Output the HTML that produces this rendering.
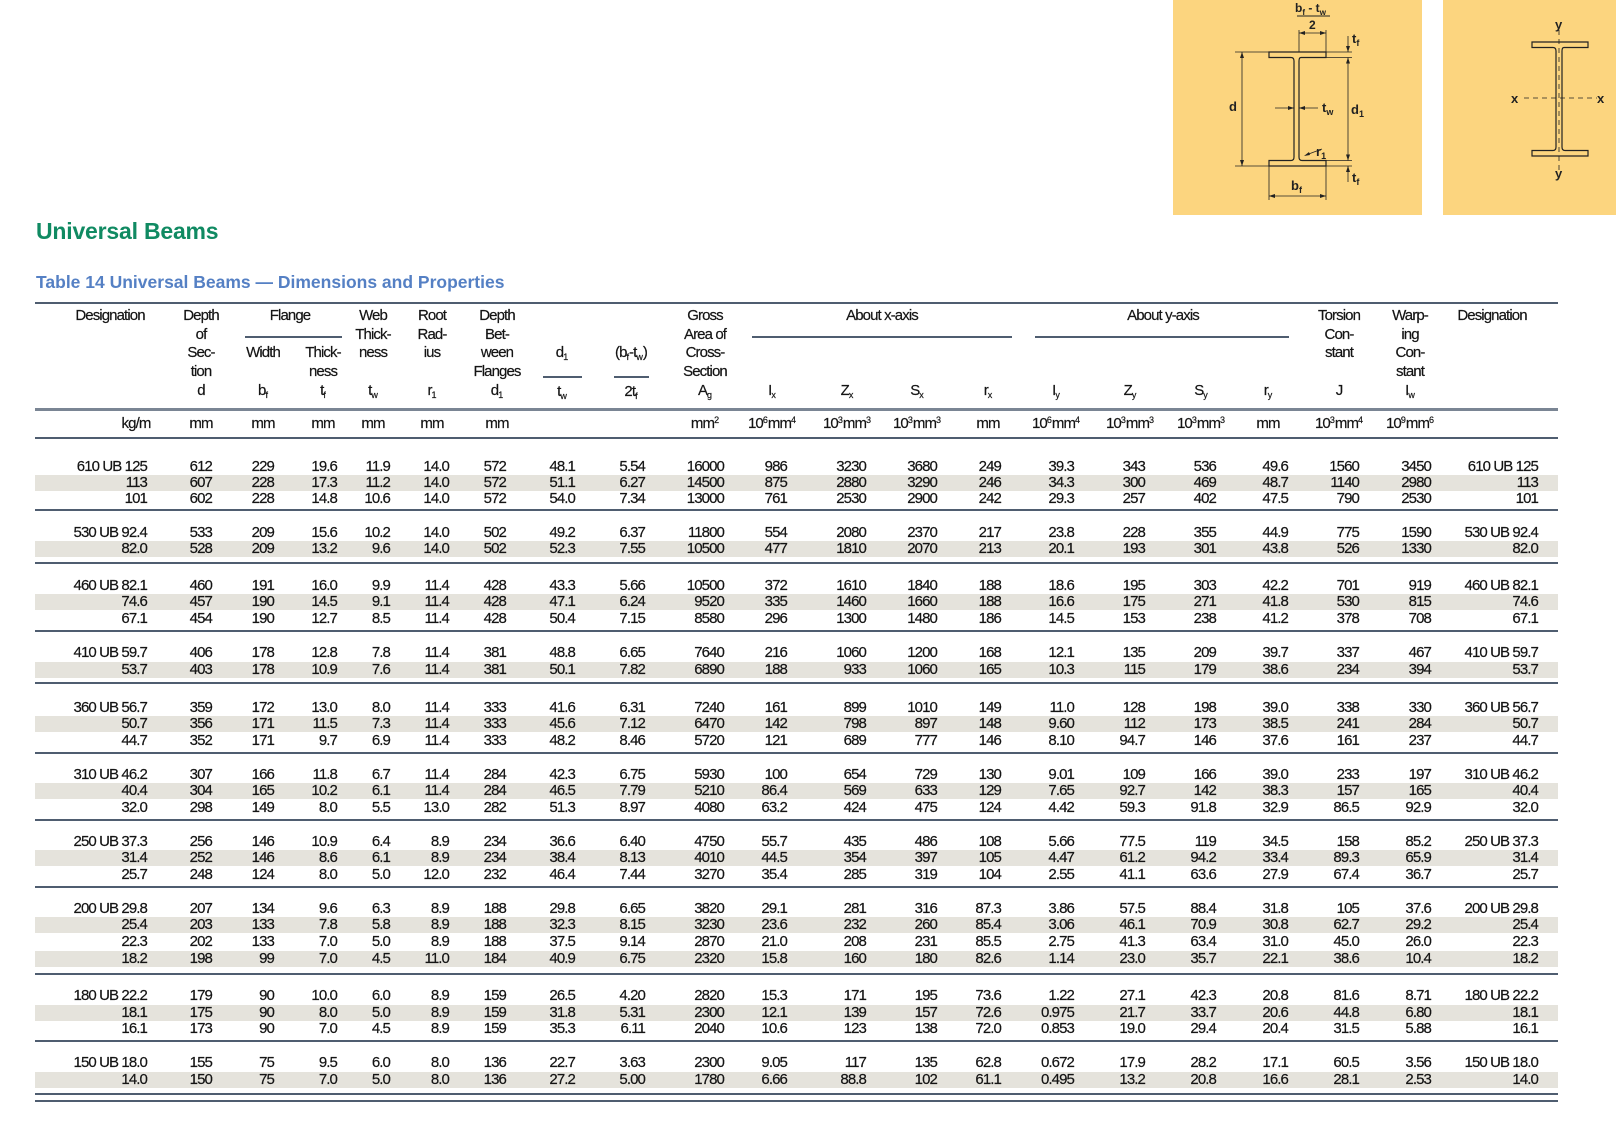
<!DOCTYPE html>
<html><head><meta charset="utf-8">
<style>
*{margin:0;padding:0;box-sizing:border-box}
body{width:1616px;height:1126px;background:#fff;position:relative;overflow:hidden;font-family:"Liberation Sans",sans-serif;color:#141414}
.t1{position:absolute;left:36px;top:218px;font-size:23px;font-weight:bold;color:#108a62;letter-spacing:-0.2px}
.t2{position:absolute;left:36px;top:272px;font-size:17.5px;font-weight:bold;color:#5580c4;letter-spacing:0;white-space:nowrap}
.ln{position:absolute;height:2px;background:#4f5d70}
.h{position:absolute;width:110px;text-align:center;font-size:15px;line-height:18.7px;letter-spacing:-0.9px;top:307px;white-space:nowrap;-webkit-text-stroke:0.2px #141414}
.u{position:absolute;width:110px;text-align:center;font-size:15px;line-height:16px;letter-spacing:-0.9px;top:416px;white-space:nowrap;-webkit-text-stroke:0.2px #141414}
.s{font-size:9px;position:relative;top:3px;letter-spacing:0}
.p{font-size:9px;position:relative;top:-5px;letter-spacing:0}
.r{position:absolute;left:35px;width:1523px;height:16px;line-height:16px;display:flex;font-size:15px;letter-spacing:-0.9px;-webkit-text-stroke:0.2px #141414}
.r.g{background:#e5e3dc}
.r span{display:block;text-align:right;white-space:nowrap}
.r span:nth-child(1){width:112px}.r span:nth-child(2){width:65px}.r span:nth-child(3){width:62px}.r span:nth-child(4){width:63px}
.r span:nth-child(5){width:53px}.r span:nth-child(6){width:59px}.r span:nth-child(7){width:57px}.r span:nth-child(8){width:69px}
.r span:nth-child(9){width:70px}.r span:nth-child(10){width:79px}.r span:nth-child(11){width:63px}.r span:nth-child(12){width:79px}
.r span:nth-child(13){width:71px}.r span:nth-child(14){width:64px}.r span:nth-child(15){width:73px}.r span:nth-child(16){width:71px}
.r span:nth-child(17){width:71px}.r span:nth-child(18){width:72px}.r span:nth-child(19){width:71px}.r span:nth-child(20){width:72px}
.r span:nth-child(21){width:107px}
</style></head><body>

<svg style="position:absolute;left:0;top:0" width="1616" height="1126" viewBox="0 0 1616 1126" font-family="Liberation Sans, sans-serif" font-weight="bold" fill="none">
<rect x="1173" y="0" width="249" height="215" fill="#fcd57f"/>
<rect x="1443" y="0" width="173" height="215" fill="#fcd57f"/>
<g stroke="#222" stroke-width="1.2">
<path d="M1269 52H1326V57.5H1301Q1299 57.5 1299 61V157Q1299 160.5 1302 160.5H1326V166H1269V160.5H1291Q1294 160.5 1294 157V61Q1294 57.5 1291 57.5H1269Z"/>
<path d="M1235 52H1269M1235 166H1269M1242 52V166" stroke-width="0.8"/>
<path d="M1326 52H1352M1326 57.5H1352M1326 160.5H1352M1326 166H1352M1348 57.5V160.5" stroke-width="0.8"/>
<path d="M1348 36V52M1348 166V182M1299 30V52M1326 30V52M1299 33H1326M1269 166V200M1326 166V200M1269 196H1326" stroke-width="0.8"/>
<path d="M1275 108H1294M1318 108H1299M1306 155L1322 149" stroke-width="0.8"/>
<path d="M1297 16H1330" stroke-width="1"/>
</g>
<g fill="#222">
<path d="M1242 52l-2 6h4zM1242 166l-2-6h4zM1348 57.5l-2 6h4zM1348 160.5l-2-6h4zM1348 52l-2-6h4zM1348 166l-2 6h4zM1299 33l6-2v4zM1326 33l-6-2v4zM1269 196l6-2v4zM1326 196l-6-2v4zM1294 108l-6-2v4zM1299 108l6-2v4zM1304 156l5-4 1 3z"/>
<text x="1229" y="111" font-size="13">d</text>
<text x="1351" y="114" font-size="13">d<tspan font-size="9" dy="3">1</tspan></text>
<text x="1322" y="112" font-size="13">t<tspan font-size="9" dy="3">w</tspan></text>
<text x="1352" y="43" font-size="13">t<tspan font-size="9" dy="3">f</tspan></text>
<text x="1352" y="182" font-size="13">t<tspan font-size="9" dy="3">f</tspan></text>
<text x="1291" y="190" font-size="13">b<tspan font-size="9" dy="3">f</tspan></text>
<text x="1316" y="156" font-size="13">r<tspan font-size="9" dy="3">1</tspan></text>
<text x="1295" y="12" font-size="12">b<tspan font-size="8" dy="3">f</tspan><tspan dy="-3"> - t</tspan><tspan font-size="8" dy="3">w</tspan></text>
<text x="1309" y="29" font-size="12">2</text>
</g>
<g stroke="#222" stroke-width="1.2">
<path d="M1532 42H1588V47.5H1564Q1562 47.5 1562 51V147Q1562 150.5 1565 150.5H1588V156H1532V150.5H1553Q1556 150.5 1556 147V51Q1556 47.5 1553 47.5H1532Z"/>
<path d="M1524 98H1597M1559 30V170" stroke-width="0.8" stroke-dasharray="5 4"/>
</g>
<g fill="#222" font-size="13">
<text x="1511" y="103">x</text><text x="1597" y="103">x</text>
<text x="1555" y="29">y</text><text x="1555" y="178">y</text>
</g>
</svg>

<div class="t1">Universal Beams</div>
<div class="t2">Table 14 Universal Beams — Dimensions and Properties</div>

<div class="ln" style="left:35px;top:302px;width:1523px"></div>
<div class="ln" style="left:35px;top:408px;width:1523px;background:#7a8594;height:2.5px"></div>
<div class="ln" style="left:35px;top:437px;width:1523px"></div>
<div class="ln" style="left:245px;top:336px;width:97px;height:1.5px"></div>
<div class="ln" style="left:543px;top:376px;width:39px;height:1.5px"></div>
<div class="ln" style="left:614px;top:376px;width:35px;height:1.5px"></div>
<div class="ln" style="left:752px;top:336px;width:260px;height:1.5px"></div>
<div class="ln" style="left:1035px;top:336px;width:254px;height:1.5px"></div>

<div class="h" style="left:55px">Designation</div>
<div class="h" style="left:146px">Depth<br>of<br>Sec-<br>tion<br>d</div>
<div class="h" style="left:235px">Flange</div>
<div class="h" style="left:208px">&nbsp;<br>&nbsp;<br>Width<br>&nbsp;<br>b<span class="s">f</span></div>
<div class="h" style="left:268px">&nbsp;<br>&nbsp;<br>Thick-<br>ness<br>t<span class="s">f</span></div>
<div class="h" style="left:318px">Web<br>Thick-<br>ness<br>&nbsp;<br>t<span class="s">w</span></div>
<div class="h" style="left:377px">Root<br>Rad-<br>ius<br>&nbsp;<br>r<span class="s">1</span></div>
<div class="h" style="left:442px">Depth<br>Bet-<br>ween<br>Flanges<br>d<span class="s">1</span></div>
<div class="h" style="left:507px">&nbsp;<br>&nbsp;<br>d<span class="s">1</span><br>&nbsp;<br>t<span class="s">w</span></div>
<div class="h" style="left:576px">&nbsp;<br>&nbsp;<br>(b<span class="s">f</span>-t<span class="s">w</span>)<br>&nbsp;<br>2t<span class="s">f</span></div>
<div class="h" style="left:650px">Gross<br>Area of<br>Cross-<br>Section<br>A<span class="s">g</span></div>
<div class="h" style="left:827px">About x-axis</div>
<div class="h" style="left:717px">&nbsp;<br>&nbsp;<br>&nbsp;<br>&nbsp;<br>I<span class="s">x</span></div>
<div class="h" style="left:792px">&nbsp;<br>&nbsp;<br>&nbsp;<br>&nbsp;<br>Z<span class="s">x</span></div>
<div class="h" style="left:862px">&nbsp;<br>&nbsp;<br>&nbsp;<br>&nbsp;<br>S<span class="s">x</span></div>
<div class="h" style="left:933px">&nbsp;<br>&nbsp;<br>&nbsp;<br>&nbsp;<br>r<span class="s">x</span></div>
<div class="h" style="left:1108px">About y-axis</div>
<div class="h" style="left:1001px">&nbsp;<br>&nbsp;<br>&nbsp;<br>&nbsp;<br>I<span class="s">y</span></div>
<div class="h" style="left:1075px">&nbsp;<br>&nbsp;<br>&nbsp;<br>&nbsp;<br>Z<span class="s">y</span></div>
<div class="h" style="left:1146px">&nbsp;<br>&nbsp;<br>&nbsp;<br>&nbsp;<br>S<span class="s">y</span></div>
<div class="h" style="left:1213px">&nbsp;<br>&nbsp;<br>&nbsp;<br>&nbsp;<br>r<span class="s">y</span></div>
<div class="h" style="left:1284px">Torsion<br>Con-<br>stant<br>&nbsp;<br>J</div>
<div class="h" style="left:1355px">Warp-<br>ing<br>Con-<br>stant<br>I<span class="s">w</span></div>
<div class="h" style="left:1437px">Designation</div>

<div class="u" style="left:81px">kg/m</div>
<div class="u" style="left:146px">mm</div>
<div class="u" style="left:208px">mm</div>
<div class="u" style="left:268px">mm</div>
<div class="u" style="left:318px">mm</div>
<div class="u" style="left:377px">mm</div>
<div class="u" style="left:442px">mm</div>
<div class="u" style="left:650px">mm<span class="p">2</span></div>
<div class="u" style="left:717px">10<span class="p">6</span>mm<span class="p">4</span></div>
<div class="u" style="left:792px">10<span class="p">3</span>mm<span class="p">3</span></div>
<div class="u" style="left:862px">10<span class="p">3</span>mm<span class="p">3</span></div>
<div class="u" style="left:933px">mm</div>
<div class="u" style="left:1001px">10<span class="p">6</span>mm<span class="p">4</span></div>
<div class="u" style="left:1075px">10<span class="p">3</span>mm<span class="p">3</span></div>
<div class="u" style="left:1146px">10<span class="p">3</span>mm<span class="p">3</span></div>
<div class="u" style="left:1213px">mm</div>
<div class="u" style="left:1284px">10<span class="p">3</span>mm<span class="p">4</span></div>
<div class="u" style="left:1355px">10<span class="p">9</span>mm<span class="p">6</span></div>

<div class="r" style="top:459px"><span>610 UB 125</span><span>612</span><span>229</span><span>19.6</span><span>11.9</span><span>14.0</span><span>572</span><span>48.1</span><span>5.54</span><span>16000</span><span>986</span><span>3230</span><span>3680</span><span>249</span><span>39.3</span><span>343</span><span>536</span><span>49.6</span><span>1560</span><span>3450</span><span>610 UB 125</span></div>
<div class="r g" style="top:475px"><span>113</span><span>607</span><span>228</span><span>17.3</span><span>11.2</span><span>14.0</span><span>572</span><span>51.1</span><span>6.27</span><span>14500</span><span>875</span><span>2880</span><span>3290</span><span>246</span><span>34.3</span><span>300</span><span>469</span><span>48.7</span><span>1140</span><span>2980</span><span>113</span></div>
<div class="r" style="top:491px"><span>101</span><span>602</span><span>228</span><span>14.8</span><span>10.6</span><span>14.0</span><span>572</span><span>54.0</span><span>7.34</span><span>13000</span><span>761</span><span>2530</span><span>2900</span><span>242</span><span>29.3</span><span>257</span><span>402</span><span>47.5</span><span>790</span><span>2530</span><span>101</span></div>
<div class="ln" style="left:35px;top:509px;width:1523px"></div>

<div class="r" style="top:525px"><span>530 UB 92.4</span><span>533</span><span>209</span><span>15.6</span><span>10.2</span><span>14.0</span><span>502</span><span>49.2</span><span>6.37</span><span>11800</span><span>554</span><span>2080</span><span>2370</span><span>217</span><span>23.8</span><span>228</span><span>355</span><span>44.9</span><span>775</span><span>1590</span><span>530 UB 92.4</span></div>
<div class="r g" style="top:541px"><span>82.0</span><span>528</span><span>209</span><span>13.2</span><span>9.6</span><span>14.0</span><span>502</span><span>52.3</span><span>7.55</span><span>10500</span><span>477</span><span>1810</span><span>2070</span><span>213</span><span>20.1</span><span>193</span><span>301</span><span>43.8</span><span>526</span><span>1330</span><span>82.0</span></div>
<div class="ln" style="left:35px;top:562px;width:1523px"></div>

<div class="r" style="top:578px"><span>460 UB 82.1</span><span>460</span><span>191</span><span>16.0</span><span>9.9</span><span>11.4</span><span>428</span><span>43.3</span><span>5.66</span><span>10500</span><span>372</span><span>1610</span><span>1840</span><span>188</span><span>18.6</span><span>195</span><span>303</span><span>42.2</span><span>701</span><span>919</span><span>460 UB 82.1</span></div>
<div class="r g" style="top:594px"><span>74.6</span><span>457</span><span>190</span><span>14.5</span><span>9.1</span><span>11.4</span><span>428</span><span>47.1</span><span>6.24</span><span>9520</span><span>335</span><span>1460</span><span>1660</span><span>188</span><span>16.6</span><span>175</span><span>271</span><span>41.8</span><span>530</span><span>815</span><span>74.6</span></div>
<div class="r" style="top:611px"><span>67.1</span><span>454</span><span>190</span><span>12.7</span><span>8.5</span><span>11.4</span><span>428</span><span>50.4</span><span>7.15</span><span>8580</span><span>296</span><span>1300</span><span>1480</span><span>186</span><span>14.5</span><span>153</span><span>238</span><span>41.2</span><span>378</span><span>708</span><span>67.1</span></div>
<div class="ln" style="left:35px;top:630px;width:1523px"></div>

<div class="r" style="top:645px"><span>410 UB 59.7</span><span>406</span><span>178</span><span>12.8</span><span>7.8</span><span>11.4</span><span>381</span><span>48.8</span><span>6.65</span><span>7640</span><span>216</span><span>1060</span><span>1200</span><span>168</span><span>12.1</span><span>135</span><span>209</span><span>39.7</span><span>337</span><span>467</span><span>410 UB 59.7</span></div>
<div class="r g" style="top:662px"><span>53.7</span><span>403</span><span>178</span><span>10.9</span><span>7.6</span><span>11.4</span><span>381</span><span>50.1</span><span>7.82</span><span>6890</span><span>188</span><span>933</span><span>1060</span><span>165</span><span>10.3</span><span>115</span><span>179</span><span>38.6</span><span>234</span><span>394</span><span>53.7</span></div>
<div class="ln" style="left:35px;top:682px;width:1523px"></div>

<div class="r" style="top:700px"><span>360 UB 56.7</span><span>359</span><span>172</span><span>13.0</span><span>8.0</span><span>11.4</span><span>333</span><span>41.6</span><span>6.31</span><span>7240</span><span>161</span><span>899</span><span>1010</span><span>149</span><span>11.0</span><span>128</span><span>198</span><span>39.0</span><span>338</span><span>330</span><span>360 UB 56.7</span></div>
<div class="r g" style="top:716px"><span>50.7</span><span>356</span><span>171</span><span>11.5</span><span>7.3</span><span>11.4</span><span>333</span><span>45.6</span><span>7.12</span><span>6470</span><span>142</span><span>798</span><span>897</span><span>148</span><span>9.60</span><span>112</span><span>173</span><span>38.5</span><span>241</span><span>284</span><span>50.7</span></div>
<div class="r" style="top:733px"><span>44.7</span><span>352</span><span>171</span><span>9.7</span><span>6.9</span><span>11.4</span><span>333</span><span>48.2</span><span>8.46</span><span>5720</span><span>121</span><span>689</span><span>777</span><span>146</span><span>8.10</span><span>94.7</span><span>146</span><span>37.6</span><span>161</span><span>237</span><span>44.7</span></div>
<div class="ln" style="left:35px;top:752px;width:1523px"></div>

<div class="r" style="top:767px"><span>310 UB 46.2</span><span>307</span><span>166</span><span>11.8</span><span>6.7</span><span>11.4</span><span>284</span><span>42.3</span><span>6.75</span><span>5930</span><span>100</span><span>654</span><span>729</span><span>130</span><span>9.01</span><span>109</span><span>166</span><span>39.0</span><span>233</span><span>197</span><span>310 UB 46.2</span></div>
<div class="r g" style="top:783px"><span>40.4</span><span>304</span><span>165</span><span>10.2</span><span>6.1</span><span>11.4</span><span>284</span><span>46.5</span><span>7.79</span><span>5210</span><span>86.4</span><span>569</span><span>633</span><span>129</span><span>7.65</span><span>92.7</span><span>142</span><span>38.3</span><span>157</span><span>165</span><span>40.4</span></div>
<div class="r" style="top:800px"><span>32.0</span><span>298</span><span>149</span><span>8.0</span><span>5.5</span><span>13.0</span><span>282</span><span>51.3</span><span>8.97</span><span>4080</span><span>63.2</span><span>424</span><span>475</span><span>124</span><span>4.42</span><span>59.3</span><span>91.8</span><span>32.9</span><span>86.5</span><span>92.9</span><span>32.0</span></div>
<div class="ln" style="left:35px;top:819px;width:1523px"></div>

<div class="r" style="top:834px"><span>250 UB 37.3</span><span>256</span><span>146</span><span>10.9</span><span>6.4</span><span>8.9</span><span>234</span><span>36.6</span><span>6.40</span><span>4750</span><span>55.7</span><span>435</span><span>486</span><span>108</span><span>5.66</span><span>77.5</span><span>119</span><span>34.5</span><span>158</span><span>85.2</span><span>250 UB 37.3</span></div>
<div class="r g" style="top:850px"><span>31.4</span><span>252</span><span>146</span><span>8.6</span><span>6.1</span><span>8.9</span><span>234</span><span>38.4</span><span>8.13</span><span>4010</span><span>44.5</span><span>354</span><span>397</span><span>105</span><span>4.47</span><span>61.2</span><span>94.2</span><span>33.4</span><span>89.3</span><span>65.9</span><span>31.4</span></div>
<div class="r" style="top:867px"><span>25.7</span><span>248</span><span>124</span><span>8.0</span><span>5.0</span><span>12.0</span><span>232</span><span>46.4</span><span>7.44</span><span>3270</span><span>35.4</span><span>285</span><span>319</span><span>104</span><span>2.55</span><span>41.1</span><span>63.6</span><span>27.9</span><span>67.4</span><span>36.7</span><span>25.7</span></div>
<div class="ln" style="left:35px;top:886px;width:1523px"></div>

<div class="r" style="top:901px"><span>200 UB 29.8</span><span>207</span><span>134</span><span>9.6</span><span>6.3</span><span>8.9</span><span>188</span><span>29.8</span><span>6.65</span><span>3820</span><span>29.1</span><span>281</span><span>316</span><span>87.3</span><span>3.86</span><span>57.5</span><span>88.4</span><span>31.8</span><span>105</span><span>37.6</span><span>200 UB 29.8</span></div>
<div class="r g" style="top:917px"><span>25.4</span><span>203</span><span>133</span><span>7.8</span><span>5.8</span><span>8.9</span><span>188</span><span>32.3</span><span>8.15</span><span>3230</span><span>23.6</span><span>232</span><span>260</span><span>85.4</span><span>3.06</span><span>46.1</span><span>70.9</span><span>30.8</span><span>62.7</span><span>29.2</span><span>25.4</span></div>
<div class="r" style="top:934px"><span>22.3</span><span>202</span><span>133</span><span>7.0</span><span>5.0</span><span>8.9</span><span>188</span><span>37.5</span><span>9.14</span><span>2870</span><span>21.0</span><span>208</span><span>231</span><span>85.5</span><span>2.75</span><span>41.3</span><span>63.4</span><span>31.0</span><span>45.0</span><span>26.0</span><span>22.3</span></div>
<div class="r g" style="top:951px"><span>18.2</span><span>198</span><span>99</span><span>7.0</span><span>4.5</span><span>11.0</span><span>184</span><span>40.9</span><span>6.75</span><span>2320</span><span>15.8</span><span>160</span><span>180</span><span>82.6</span><span>1.14</span><span>23.0</span><span>35.7</span><span>22.1</span><span>38.6</span><span>10.4</span><span>18.2</span></div>
<div class="ln" style="left:35px;top:973px;width:1523px"></div>

<div class="r" style="top:988px"><span>180 UB 22.2</span><span>179</span><span>90</span><span>10.0</span><span>6.0</span><span>8.9</span><span>159</span><span>26.5</span><span>4.20</span><span>2820</span><span>15.3</span><span>171</span><span>195</span><span>73.6</span><span>1.22</span><span>27.1</span><span>42.3</span><span>20.8</span><span>81.6</span><span>8.71</span><span>180 UB 22.2</span></div>
<div class="r g" style="top:1005px"><span>18.1</span><span>175</span><span>90</span><span>8.0</span><span>5.0</span><span>8.9</span><span>159</span><span>31.8</span><span>5.31</span><span>2300</span><span>12.1</span><span>139</span><span>157</span><span>72.6</span><span>0.975</span><span>21.7</span><span>33.7</span><span>20.6</span><span>44.8</span><span>6.80</span><span>18.1</span></div>
<div class="r" style="top:1021px"><span>16.1</span><span>173</span><span>90</span><span>7.0</span><span>4.5</span><span>8.9</span><span>159</span><span>35.3</span><span>6.11</span><span>2040</span><span>10.6</span><span>123</span><span>138</span><span>72.0</span><span>0.853</span><span>19.0</span><span>29.4</span><span>20.4</span><span>31.5</span><span>5.88</span><span>16.1</span></div>
<div class="ln" style="left:35px;top:1040px;width:1523px"></div>

<div class="r" style="top:1055px"><span>150 UB 18.0</span><span>155</span><span>75</span><span>9.5</span><span>6.0</span><span>8.0</span><span>136</span><span>22.7</span><span>3.63</span><span>2300</span><span>9.05</span><span>117</span><span>135</span><span>62.8</span><span>0.672</span><span>17.9</span><span>28.2</span><span>17.1</span><span>60.5</span><span>3.56</span><span>150 UB 18.0</span></div>
<div class="r g" style="top:1072px"><span>14.0</span><span>150</span><span>75</span><span>7.0</span><span>5.0</span><span>8.0</span><span>136</span><span>27.2</span><span>5.00</span><span>1780</span><span>6.66</span><span>88.8</span><span>102</span><span>61.1</span><span>0.495</span><span>13.2</span><span>20.8</span><span>16.6</span><span>28.1</span><span>2.53</span><span>14.0</span></div>
<div class="ln" style="left:35px;top:1093px;width:1523px"></div>
<div class="ln" style="left:35px;top:1100px;width:1523px"></div>
</body></html>
